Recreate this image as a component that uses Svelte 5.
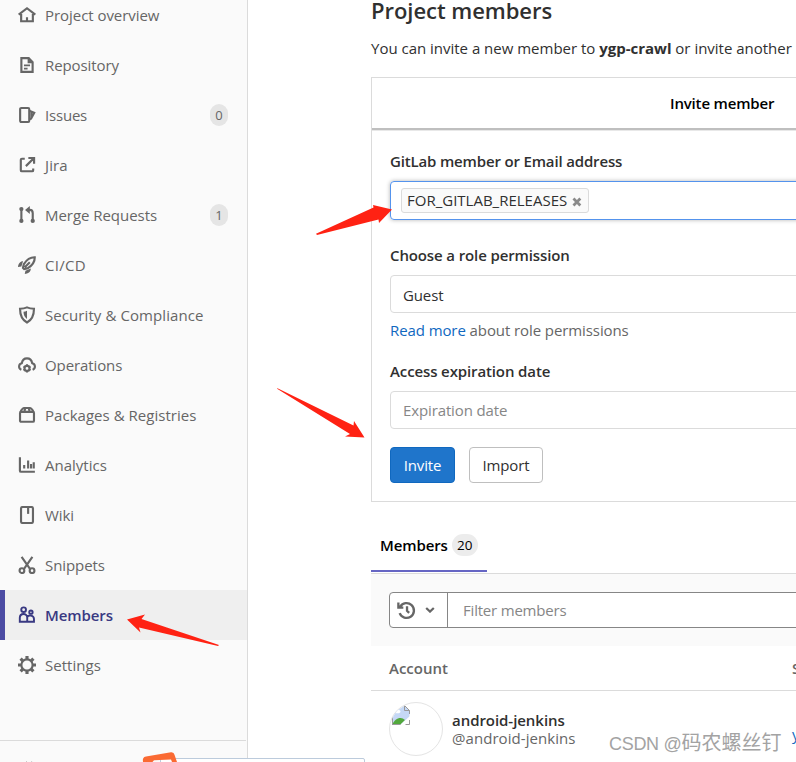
<script>
    /**
     * Sidebar entries, in display order. Icons are drawn on a 16x16 grid,
     * spacing is the letter spacing of the label in pixels.
     */
    const nav_items = [
        { label: "Project overview", spacing: -0.05, icon: '<path d="M.6 7.7 8 2l7.4 5.7M2.8 7v6.600h10.400V7M8 13.500v-3.500"/>' },
        { label: "Repository", spacing: -0.1, icon: '<path d="M3 1.9h6.5L13 5.4v8.7H3zM9.500 2v3.500H13"/><path d="M5.300 8.300h5.400M5.300 11.200h3.200" class="thin"/>' },
        { label: "Issues", spacing: -0.2, count: 0, icon: '<rect x="1.9" y="1.8" width="8.1" height="12.4" rx="1"/><path d="M10 4.3 14.4 6 11.6 11.2 10 11.8M11.9 5.5v5"/>' },
        { label: "Jira", spacing: 0.1, icon: '<path d="M6 2.4H3.5q-1 0-1 1v9.2q0 1 1 1h9q1 0 1-1V11M9.2 1.8h5.1v5.1M7 9l6.8-6.8"/>' },
        { label: "Merge Requests", spacing: -0.04, count: 1, icon: '<path d="M3 3v10M8.500 3.500h2q2.600 0 2.600 3V13"/><g class="solid"><path d="M10.500 0v7L6.300 3.500z"/><circle cx="3" cy="2.7" r="1.9"/><circle cx="3" cy="13.3" r="1.9"/><circle cx="13.1" cy="13.3" r="1.9"/></g>' },
        { label: "CI/CD", spacing: 0.3, icon: '<path d="M14.9 1.1C10.5 1 8 2.8 5.2 7.2l-.8 3.3 1.1 1.1 3.3-.8c4.4-2.8 6.2-5.3 6.1-9.7zM6 10l4.5-4.5"/><path class="solid" d="M4.500 4.700C2 4.600.200 7 0 9.800l3-.500zM11.400 11.200l-4.800 2L6 16c2.800 0 5.500-1.800 5.400-4.800z"/>' },
        { label: "Security & Compliance", spacing: 0.08, icon: '<path d="M8 1.2c2 .9 4 1.2 6.2 1.2 0 5.500-1.2 9.500-6.200 12.300C3 11.900 1.800 7.900 1.800 2.400 4 2.400 6 2.100 8 1.200z"/><path class="solid" d="M8 4.300v7.200C6 10 4.900 8 4.900 5.100 6 5.100 7 4.800 8 4.300z"/>' },
        { label: "Operations", spacing: -0.1, icon: '<path d="M3 12.2C.2 11 .3 7 3.400 6.400 4.300.700 11.700.700 12.600 6.400c3.100.600 3.200 4.600.400 5.800"/><circle cx="8" cy="11" r="2.200"/><path d="M8 7.300v1.400M8 13.200v1.500M4.900 9.200l1 .600M10.100 12.200l1 .600M4.900 12.800l1-.600M10.100 9.800l1-.600"/>' },
        { label: "Packages & Registries", spacing: 0.03, icon: '<rect x="1.800" y="5.200" width="12.400" height="8.800" rx="1"/><path d="M2.200 5.300C3.500 2.500 4.500 1.800 5.500 1.800h5c1 0 2 .700 3.300 3.500M6.400 2 5.700 5M9.600 2l.700 3"/>' },
        { label: "Analytics", spacing: 0, icon: '<path d="M1.700 1v12q0 1 1 1H15M5.500 8v3M9 4v7M14 5.500V11M11.600 7v4"/>' },
        { label: "Wiki", spacing: -0.05, icon: '<rect x="2.700" y=".9" width="10.600" height="14.200" rx="1.300"/><path d="M9 1v6"/>' },
        { label: "Snippets", spacing: -0.08, icon: '<path d="m3.200.800 7.600 10.800M12.800.800 5.200 11.600"/><circle cx="3.500" cy="13" r="2.100"/><circle cx="12.500" cy="13" r="2.100"/>' },
        { label: "Members", spacing: -0.1, active: true, icon: '<circle cx="5" cy="3.300" r="2.100"/><circle cx="11.500" cy="5.500" r="1.500"/><path d="M1.600 14V10.500C1.600 6 8.200 6 8.200 10.500V14zM8.200 14h6v-2.500c0-3.400-5-3.900-6-1.500"/>' },
        { label: "Settings", spacing: 0.03, icon: '<circle cx="8" cy="8" r="5"/><path class="teeth" d="M8 0v3M8 13v3M0 8h3M13 8h3M2.300 2.300l2.200 2.200M11.500 11.500l2.200 2.200M2.300 13.700l2.200-2.200M11.500 4.500l2.200-2.200"/>' },
    ];
</script>

<div class="page">
    <aside class="sidebar">
        <nav class="sidebar-nav">
            {#each nav_items as item}
                <a class="nav-item" class:active={item.active} href="#top">
                    <svg class="nav-icon" viewBox="0 0 16 16">{@html item.icon}</svg>
                    <span class="nav-label" style:letter-spacing="{item.spacing}px">{item.label}</span>
                    {#if item.count !== undefined}
                        <span class="nav-count">{item.count}</span>
                    {/if}
                </a>
            {/each}
        </nav>
        <div class="sidebar-toggle">
            <svg viewBox="0 0 16 16"><path d="m8 1-7 7 7 7M14 1 7 8l7 7"/></svg>
        </div>
    </aside>

    <main class="content">
        <h1>Project members</h1>
        <p class="intro">You can invite a new member to <strong>ygp-crawl</strong> or invite another</p>

        <section class="panel">
            <div class="panel-tab"><span>Invite member</span></div>
            <form class="panel-body">
                <div class="label member-label">GitLab member or Email address</div>
                <div class="field focused">
                    <span class="token">
                        <span class="token-text">FOR_GITLAB_RELEASES</span>
                        <svg viewBox="0 0 10 10"><path d="m1.500 1.500 7 7m0-7-7 7"/></svg>
                    </span>
                </div>
                <div class="label role-label">Choose a role permission</div>
                <div class="field">Guest</div>
                <div class="help"><a href="#roles">Read more</a> about role permissions</div>
                <div class="label date-label">Access expiration date</div>
                <div class="field placeholder">Expiration date</div>
                <div class="actions">
                    <button type="button" class="btn primary">Invite</button>
                    <button type="button" class="btn">Import</button>
                </div>
            </form>
        </section>

        <div class="tabs">
            <div class="tab">Members <span class="tab-count">20</span></div>
        </div>
        <div class="filter-bar">
            <div class="filter">
                <div class="filter-history">
                    <svg class="history" viewBox="0 0 18 18"><path d="M3 5.500a7 7 0 1 1-.5 6M1.300 1.500V6.300H6M9.500 5v4.300l2 2"/></svg>
                    <svg class="chevron" viewBox="0 0 10 6"><path d="m1.200 1 3.800 3.600L8.800 1"/></svg>
                </div>
                <div class="filter-text">Filter members</div>
            </div>
        </div>
        <div class="table-head"><span>Account</span><span>Source</span></div>
        <div class="table-row">
            <div class="avatar">
                <svg viewBox="0 0 18 20">
                    <path d="M.5.500h12l5 5v14H.5z" fill="#c5d8f5"/>
                    <ellipse cx="5.500" cy="6.500" rx="3" ry="1.800" fill="#fff"/>
                    <path d="M0 20c3-7 9-9 13-5l-5 5z" fill="#52a83c"/>
                    <path d="M8 20 18 11v9z" fill="#fff"/>
                    <path d="M.5 20V.500h12l5 5V9M12.500.500v5h5M.5 19.500h8M13.500 19.500h4V15" fill="none" stroke="#999"/>
                </svg>
            </div>
            <div class="member">
                <span class="member-name">android-jenkins</span>
                <span class="member-handle">@android-jenkins</span>
            </div>
            <a class="source" href="#project">ygp-crawl</a>
        </div>
    </main>

    <!-- Annotation arrows -->
    <svg class="arrows" viewBox="0 0 796 762">
        <path d="M316 233.800 373.500 207.500 373 205 392 209.500 379 223 378.500 219.500 317 235z"/>
        <path d="M277 388 353.500 425.500 354 421 364.500 437.500 345 436.500 350 434 277.500 389z"/>
        <path d="M127 619.500 145 614.500 141.500 619 219 645 218 646 139 627.500 140.500 632.500z"/>
    </svg>

    <div class="status-bubble"></div>
    <svg class="app-logo" viewBox="0 0 36 10">
        <path d="M1 10Q0 5 4 4.500L29 .300q3-.300 3.500 2.500L35 10H30l-1-2.500-17 .8L10.500 10z"/>
    </svg>
    <div class="watermark">CSDN @<span>码农螺丝钉</span></div>
</div>

<style>
    :global(body) {
        margin: 0;
        overflow: hidden;
    }

    .page {
        position: relative;
        display: flex;
        width: 796px;
        height: 762px;
        overflow: hidden;
        background: #fff;
        color: #303030;
        font: 15px/24px "Open Sans", "Noto Sans", sans-serif;
    }

    a {
        color: #1068bf;
        text-decoration: none;
    }

    /*----------  Sidebar  ----------*/

    .sidebar {
        flex: none;
        box-sizing: border-box;
        width: 248px;
        height: 762px;
        overflow: hidden;
        background: #fafafa;
        border-right: 1px solid #dbdbdb;
    }

    .sidebar-nav {
        height: 750px;
        margin-top: -10px;
    }

    .nav-item {
        display: flex;
        align-items: center;
        box-sizing: border-box;
        height: 50px;
        padding: 0 19px 0 18px;
        color: #666;
    }

    .nav-icon {
        width: 18px;
        height: 18px;
        margin-right: 9px;
        fill: none;
        stroke: currentColor;
        stroke-width: 1.9;
    }

    .nav-icon :global(.solid) {
        fill: currentColor;
        stroke: none;
    }

    .nav-icon :global(.thin) {
        stroke-width: 1.5;
    }

    .nav-icon :global(.teeth) {
        stroke-width: 2.8;
    }

    .nav-label {
        flex: 1;
    }

    .nav-count {
        width: 18px;
        height: 22px;
        border-radius: 10px;
        background: #e5e5e5;
        font-size: 13px;
        line-height: 22px;
        text-align: center;
    }

    .active {
        padding-left: 13px;
        border-left: 5px solid #4b4ba3;
        background: #efefef;
        color: #393982;
        font-weight: 600;
    }

    .active .nav-icon {
        stroke-width: 1.7;
    }

    .sidebar-toggle {
        width: 246px;
        height: 21px;
        border-top: 1px solid #dbdbdb;
    }

    .sidebar-toggle svg {
        display: block;
        width: 14px;
        height: 14px;
        margin: 20px 0 0 20px;
        fill: none;
        stroke: #666;
        stroke-width: 1.6;
    }

    /*----------  Content  ----------*/

    .content {
        flex: none;
        width: 700px;
        margin-left: 123px;
    }

    h1 {
        height: 23px;
        margin: 0 0 13px;
        font-size: 22px;
        font-weight: 600;
        line-height: 20px;
        letter-spacing: -0.05px;
    }

    .intro {
        margin: 0 0 17px;
        letter-spacing: -0.01px;
    }

    .panel {
        box-sizing: border-box;
        height: 425px;
        border: 1px solid #dbdbdb;
    }

    .panel-tab {
        height: 50px;
        border-bottom: 2px solid #bfbfbf;
        box-shadow: 0 1px #e8e8e8;
        color: #000;
        font-weight: 600;
        line-height: 50px;
    }

    .panel-tab span {
        display: block;
        width: 104px;
        margin-left: 298px;
        letter-spacing: -0.17px;
        white-space: nowrap;
    }

    .panel-body {
        padding: 19px 18px;
    }

    .label {
        height: 24px;
        margin-bottom: 8px;
        font-weight: 600;
        letter-spacing: -0.12px;
    }

    .member-label {
        letter-spacing: -0.16px;
    }

    .role-label {
        margin-top: 23px;
    }

    .date-label {
        margin-top: 17px;
    }

    .field {
        box-sizing: border-box;
        height: 38px;
        padding: 0 12px;
        border: 1px solid #dbdbdb;
        border-radius: 4px;
        line-height: 38px;
        letter-spacing: -0.12px;
    }

    .placeholder {
        color: #868686;
        line-height: 36px;
    }

    .focused {
        display: flex;
        align-items: center;
        height: 39px;
        padding: 0 10px;
        border-color: #5493ed;
        box-shadow: 0 0 4px rgba(0, 0, 0, 0.3);
    }

    .token {
        box-sizing: border-box;
        display: flex;
        align-items: center;
        width: 188px;
        height: 25px;
        padding: 0 6px 0 5px;
        border: 1px solid #dbdbdb;
        border-radius: 3px;
        background: #fafafa;
        letter-spacing: 0;
        white-space: nowrap;
    }

    .token-text {
        height: 24px;
        line-height: 23px;
    }

    .token svg {
        width: 10px;
        height: 10px;
        margin: 3px 0 0 5px;
        fill: none;
        stroke: #8a8a8a;
        stroke-width: 2.8;
    }

    .help {
        height: 24px;
        margin-top: 5px;
        color: #666;
        letter-spacing: -0.09px;
    }

    .actions {
        display: flex;
        gap: 14px;
        margin-top: 18px;
    }

    .btn {
        box-sizing: border-box;
        width: 74px;
        height: 36px;
        padding: 0;
        border: 1px solid #bfbfbf;
        border-radius: 4px;
        background: #fff;
        color: #303030;
        font: inherit;
        letter-spacing: -0.15px;
    }

    .primary {
        width: 65px;
        border-color: #1068bf;
        background: #1f75cb;
        color: #fff;
        font-weight: 500;
    }

    /*----------  Members table  ----------*/

    .tabs {
        height: 71px;
        border-bottom: 1px solid #dbdbdb;
    }

    .tab {
        display: flex;
        align-items: center;
        box-sizing: border-box;
        width: 116px;
        height: 70px;
        padding: 18px 0 0 9px;
        border-bottom: 2px solid #6666c4;
        color: #000;
        font-weight: 600;
        letter-spacing: -0.12px;
    }

    .tab-count {
        width: 26px;
        height: 22px;
        margin-left: 4px;
        border-radius: 11px;
        background: #ececec;
        font-size: 13.5px;
        font-weight: 500;
        line-height: 22px;
        text-align: center;
    }

    .filter-bar {
        box-sizing: border-box;
        height: 72px;
        padding: 18px;
        background: #fafafa;
    }

    .filter {
        display: flex;
        box-sizing: border-box;
        height: 36px;
        border: 1px solid #868686;
        border-radius: 4px;
        background: #fff;
    }

    .filter-history {
        display: flex;
        align-items: center;
        width: 57px;
        border-right: 1px solid #868686;
    }

    .filter-history svg {
        fill: none;
        stroke: #666;
        stroke-width: 2.2;
    }

    .history {
        width: 19px;
        height: 19px;
        margin: 0 9px 0 7px;
    }

    .chevron {
        width: 10px;
        height: 6px;
    }

    .filter-text {
        padding-left: 15px;
        color: #868686;
        line-height: 35px;
        letter-spacing: -0.2px;
    }

    .table-head {
        display: flex;
        height: 44px;
        padding-left: 18px;
        border-bottom: 1px solid #dbdbdb;
        color: #666;
        font-weight: 600;
        line-height: 44px;
    }

    .table-head span:first-child {
        width: 403px;
    }

    .table-row {
        display: flex;
        padding: 11px 18px;
    }

    .avatar {
        box-sizing: border-box;
        width: 54px;
        height: 54px;
        overflow: hidden;
        border: 1px solid #e4e4e4;
        border-radius: 50%;
    }

    .avatar svg {
        display: block;
        width: 18px;
        height: 20px;
        margin: 2px 0 0 2px;
    }

    .member {
        display: flex;
        flex-direction: column;
        width: 340px;
        padding: 9px 0 0 9px;
        line-height: 18px;
    }

    .member-name {
        font-weight: 600;
        letter-spacing: -0.05px;
    }

    .member-handle {
        color: #666;
        letter-spacing: 0.06px;
    }

    .source {
        padding-top: 20px;
    }

    /*----------  Overlays  ----------*/

    .arrows {
        position: absolute;
        inset: 0;
        width: 796px;
        height: 762px;
        fill: #ff2213;
    }

    .status-bubble {
        position: absolute;
        left: 160px;
        bottom: -2px;
        width: 203px;
        height: 4px;
        border: 1px solid #bccbdc;
        border-radius: 0 2px 0 0;
        background: #fff;
    }

    .app-logo {
        position: absolute;
        left: 142px;
        bottom: 0;
        width: 36px;
        height: 10px;
        fill: #fa6a33;
    }

    .watermark {
        position: absolute;
        top: 730px;
        left: 609px;
        color: #a3a3a3;
        font: 18px/26px "Liberation Sans", "Noto Sans CJK SC", sans-serif;
        letter-spacing: -0.3px;
        text-shadow: 1px 1px 0 #fff;
        white-space: nowrap;
    }

    .watermark span {
        font-size: 20px;
        letter-spacing: 0;
    }
</style>
